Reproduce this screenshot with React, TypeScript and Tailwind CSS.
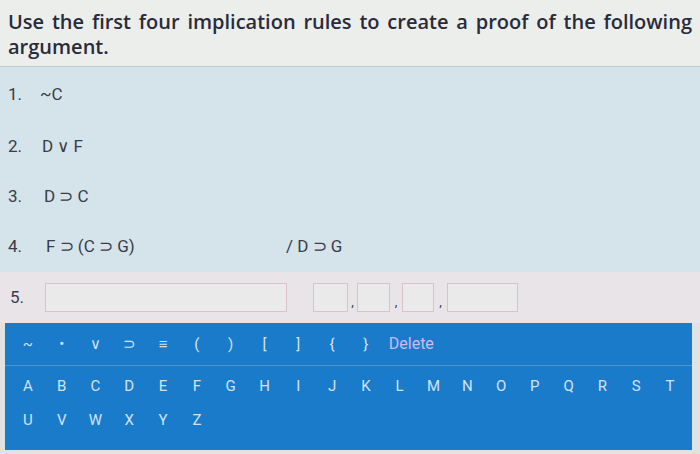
import React from "react";

const symbols = ["~", "•", "∨", "⊃", "≡", "(", ")", "[", "]", "{", "}"];
const row1 = "ABCDEFGHIJKLMNOPQRST".split("");
const row2 = "UVWXYZ".split("");

function Line({ n, text, extra, h, lw }: { n: string; text: string; extra?: string; h: string; lw: string }) {
  return (
    <div className={`flex items-center ${h}`}>
      <span className={`${lw} pl-[8px] shrink-0`}>{n}</span>
      <span className="w-[240px] shrink-0">{text}</span>
      {extra && <span>{extra}</span>}
    </div>
  );
}

export default function App() {
  return (
    <div className="w-[700px] h-[454px] overflow-hidden bg-[#dfe3e1] flex flex-col" style={{ fontFamily: "Roboto, 'Liberation Sans', sans-serif" }}>
      <div className="h-[66px] bg-[#eceeec] px-[8px] pt-[9px]">
        <p
          className="text-[20px] leading-[25px] font-semibold text-[#2a2b3a] text-justify"
          style={{ fontFamily: "'Open Sans', 'Liberation Sans', sans-serif", textAlignLast: "left" }}
        >
          Use the first four implication rules to create a proof of the following argument.
        </p>
      </div>
      <div className="bg-[#d5e3ea] border-t border-[#b9cfdc] text-[17px] text-[#3a3b48]">
        <Line n="1." text="~C" h="h-[55px]" lw="w-[40px]" />
        <Line n="2." text="D ∨ F" h="h-[50px]" lw="w-[42px]" />
        <Line n="3." text="D ⊃ C" h="h-[50px]" lw="w-[44px]" />
        <Line n="4." text="F ⊃ (C ⊃ G)" extra="/ D ⊃ G" h="h-[50px]" lw="w-[46px]" />
      </div>
      <div className="h-[51px] bg-[#e9e4e7] flex items-center text-[17px] text-[#3a3b48]">
        <span className="w-[45px] pl-[10px]">5.</span>
        <div className="w-[242px] h-[29px] border border-[#dcc0cc] bg-[#eaeaea]" />
        <div className="w-[35px] h-[29px] border border-[#dcc0cc] bg-[#eaeaea] ml-[26px]" />
        <span className="w-[9px] text-center text-[13px] pt-[8px]">,</span>
        <div className="w-[33px] h-[29px] border border-[#dcc0cc] bg-[#eaeaea]" />
        <span className="w-[12px] text-center text-[13px] pt-[8px]">,</span>
        <div className="w-[32px] h-[29px] border border-[#dcc0cc] bg-[#eaeaea]" />
        <span className="w-[13px] text-center text-[13px] pt-[8px]">,</span>
        <div className="w-[71px] h-[29px] border border-[#dcc0cc] bg-[#eaeaea]" />
      </div>
      <div className="ml-[5px] mr-[8px] h-[127px] bg-[#1b7bcb] text-[#d3e2ef] text-[15px]">
        <div className="h-[43px] flex items-center pl-[6px] border-b border-[#4b97d6]">
          {symbols.map((s) => (
            <span key={s} className="w-[33.8px] text-center">{s}</span>
          ))}
          <span className="ml-[6px] text-[16px] text-[#c9bcf4]">Delete</span>
        </div>
        <div className="pt-[3px] pl-[6px]">
          <div className="h-[34px] flex items-center">
            {row1.map((c) => (
              <span key={c} className="w-[33.8px] text-center">{c}</span>
            ))}
          </div>
          <div className="h-[34px] flex items-center">
            {row2.map((c) => (
              <span key={c} className="w-[33.8px] text-center">{c}</span>
            ))}
          </div>
        </div>
      </div>
    </div>
  );
}
